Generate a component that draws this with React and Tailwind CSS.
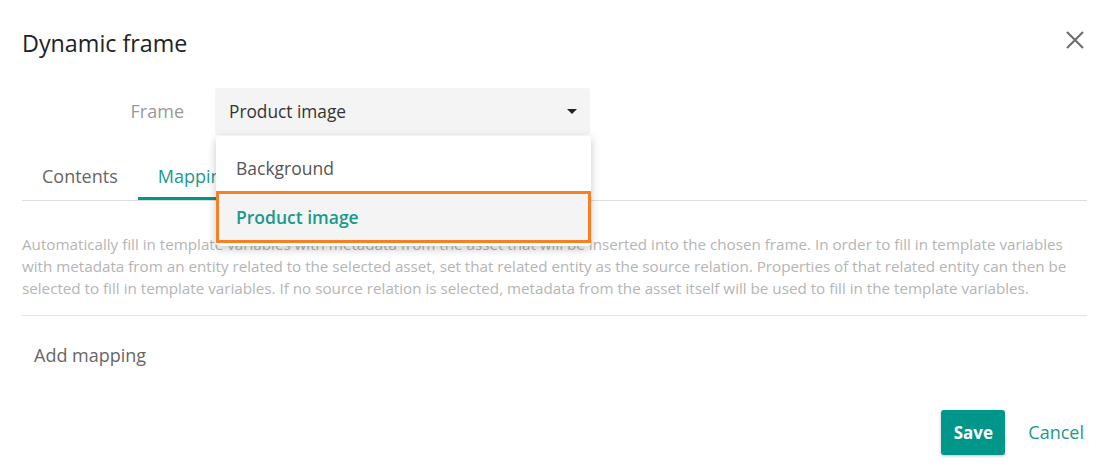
import React from 'react';

const font = { fontFamily: '"Open Sans", "Noto Sans", sans-serif' };

const CloseIcon = () => (
  <svg width="20" height="20" viewBox="0 0 20 20" fill="none" stroke="#6b6b6b" strokeWidth="2">
    <path d="M2 2 L18 18 M18 2 L2 18" />
  </svg>
);

const FrameSelect = () => (
  <div className="relative w-[375px]">
    <div className="h-[47px] bg-[#f4f4f4] rounded-[3px] flex items-center justify-between pl-[14px] pr-[13px]">
      <span className="text-[17.3px] text-[#333]">Product image</span>
      <svg width="10" height="6" viewBox="0 0 10 6"><path d="M0 0 L10 0 L5 5 Z" fill="#222" /></svg>
    </div>
    <div className="absolute left-[1px] top-[48px] w-[375px] bg-white rounded-[3px] shadow-[0_3px_10px_rgba(0,0,0,0.22)] z-10 pb-[3px]">
      <div className="h-[55px] pt-[9px] flex items-center pl-[20px] text-[17.5px] text-[#555]">Background</div>
      <div className="h-[52px] flex items-center pl-[17px] text-[17.5px] font-semibold text-[#1a9a8c] bg-[#f4f4f4] border-[3px] border-[#f58025]">
        Product image
      </div>
    </div>
  </div>
);

export default function App() {
  return (
    <div className="w-[1113px] h-[470px] bg-white pl-[22px] pr-[26px] overflow-hidden" style={font}>
      <div className="flex items-center justify-between h-[88px] pb-[2px]">
        <h1 className="text-[23.3px] text-[#222]">Dynamic frame</h1>
        <div className="mr-[2px] -mt-[6px]"><CloseIcon /></div>
      </div>

      <div className="flex items-center">
        <div className="w-[163px] text-right text-[18px] text-[#999] pr-[1px]">Frame</div>
        <div className="ml-[30px]"><FrameSelect /></div>
      </div>

      <div className="flex border-b border-[#dedede] mt-[18px]">
        <div className="px-[20px] h-[47px] flex items-center text-[18px] text-[#666]">Contents</div>
        <div className="px-[20px] h-[47px] flex items-center text-[18px] text-[#1a9a8c] border-b-[3px] border-[#00968a] pt-[3px]">Mapping</div>
      </div>

      <p className="mt-[32px] text-[15.2px] leading-[22px] text-[#b5b5b5]">
        Automatically fill in template variables with metadata from the asset that will be inserted into the chosen frame. In order to fill in template variables with metadata from an entity related to the selected asset, set that related entity as the source relation. Properties of that related entity can then be selected to fill in template variables. If no source relation is selected, metadata from the asset itself will be used to fill in the template variables.
      </p>

      <div className="border-t border-[#e3e3e3] mt-[16px]" />

      <div className="pl-[12px] mt-[26px] text-[18px] text-[#666]">Add mapping</div>

      <div className="flex justify-end items-center gap-[23px] mt-[41px] pr-[3px]">
        <button className="h-[45px] w-[64px] bg-[#00968a] rounded-[3px] text-white text-[17px] font-bold shadow-[0_1px_3px_rgba(0,0,0,0.25)]">Save</button>
        <button className="text-[18px] text-[#1a9a8c]">Cancel</button>
      </div>
    </div>
  );
}
